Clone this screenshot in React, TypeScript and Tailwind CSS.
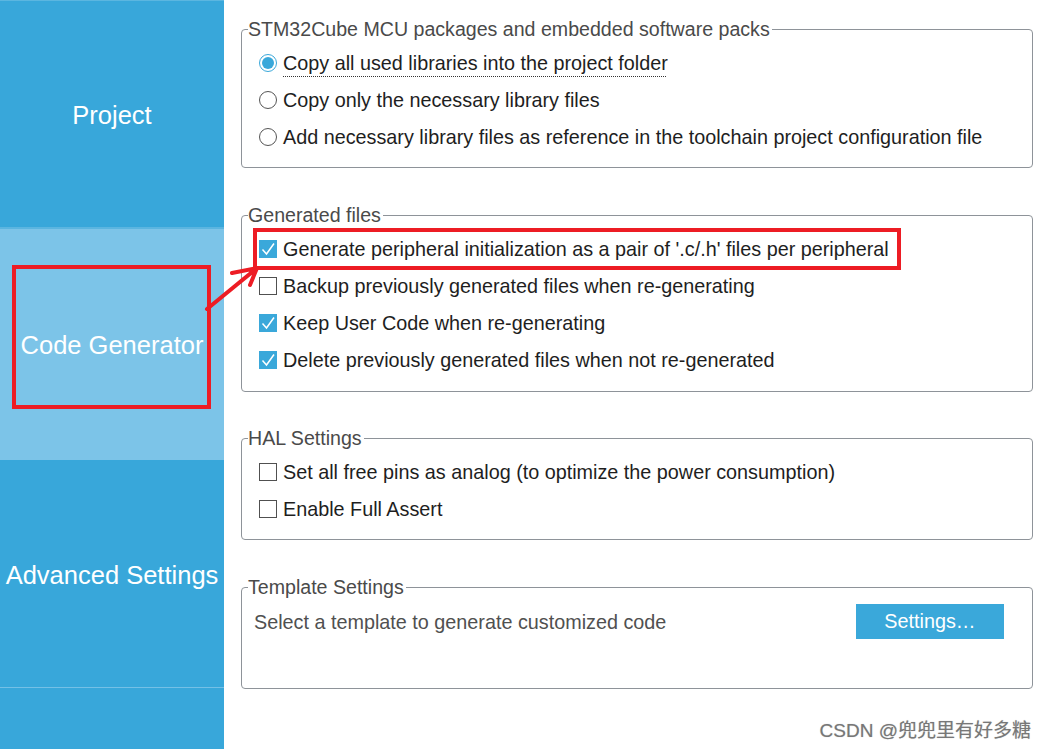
import React from "react";

const FONT = "font-['Liberation_Sans','Arimo',Arial,sans-serif]";

function Radio({ checked }: { checked?: boolean }) {
  return checked ? (
    <span className="flex h-[18px] w-[18px] shrink-0 items-center justify-center rounded-full border-[1.5px] border-[#3aa8da] bg-white">
      <span className="h-[12px] w-[12px] rounded-full bg-[#3aa8da]" />
    </span>
  ) : (
    <span className="h-[18px] w-[18px] shrink-0 rounded-full border border-[#555] bg-white" />
  );
}

function Check({ checked }: { checked?: boolean }) {
  return checked ? (
    <span className="flex h-[18px] w-[18px] shrink-0 items-center justify-center bg-[#3aa8da]">
      <svg width="18" height="18" viewBox="0 0 18 18">
        <path d="M3.5 9.5 L7.5 14 L15 3.5" fill="none" stroke="#fff" strokeWidth="1.5" />
      </svg>
    </span>
  ) : (
    <span className="h-[18px] w-[18px] shrink-0 border border-[#505050] bg-white" />
  );
}

function Row({ control, children }: { control: React.ReactNode; children: React.ReactNode }) {
  return (
    <div className="flex h-[37px] items-center gap-[6px] pl-[17px]">
      {control}
      <span className="text-[19.8px] leading-[24px] text-[#1e1e1e] whitespace-nowrap">{children}</span>
    </div>
  );
}

function Group({ title, children, className = "" }: { title: string; children: React.ReactNode; className?: string }) {
  return (
    <fieldset className={`m-0 w-[792px] rounded-[4px] border border-[#8e9399] p-0 ${className}`}>
      <legend className="ml-[6px] pr-[2px] text-[19.6px] leading-[24px] text-[#4a4a4a] whitespace-nowrap">{title}</legend>
      {children}
    </fieldset>
  );
}

export default function App() {
  return (
    <div className={`relative flex h-[749px] w-[1047px] overflow-hidden bg-white ${FONT}`}>
      <aside className="flex w-[224px] shrink-0 flex-col bg-[#38a7da] text-white">
        <div className="flex h-[227px] items-center justify-center border-t border-[#5bb6e0] pt-[2px] text-[25.5px]">Project</div>
        <div className="h-[2px] bg-[#5ab5e0]" />
        <div className="flex h-[231px] items-center justify-center bg-[#7cc4e8] pt-[2px] text-[25.5px] whitespace-nowrap">Code Generator</div>
        <div className="flex h-[227px] items-center justify-center pt-[3px] text-[25.5px] whitespace-nowrap">Advanced Settings</div>
        <div className="h-px bg-[#74c0e6]" />
        <div className="flex-1" />
      </aside>

      <main className="flex flex-col pl-[17px] pt-[17px]">
        <Group title="STM32Cube MCU packages and embedded software packs" className="pb-[12px]">
          <div className="pt-[3px]">
            <Row control={<Radio checked />}>
              <span className="underline decoration-dotted decoration-[#333] decoration-1 underline-offset-[6px]">
                Copy all used libraries into the project folder
              </span>
            </Row>
            <Row control={<Radio />}>Copy only the necessary library files</Row>
            <Row control={<Radio />}>Add necessary library files as reference in the toolchain project configuration file</Row>
          </div>
        </Group>

        <Group title="Generated files" className="mt-[35px] pb-[13px]">
          <div className="pt-[3px]">
            <Row control={<Check checked />}>Generate peripheral initialization as a pair of '.c/.h' files per peripheral</Row>
            <Row control={<Check />}>Backup previously generated files when re-generating</Row>
            <Row control={<Check checked />}>Keep User Code when re-generating</Row>
            <Row control={<Check checked />}>Delete previously generated files when not re-generated</Row>
          </div>
        </Group>

        <Group title="HAL Settings" className="mt-[34px] pb-[12px]">
          <div className="pt-[3px]">
            <Row control={<Check />}>Set all free pins as analog (to optimize the power consumption)</Row>
            <Row control={<Check />}>Enable Full Assert</Row>
          </div>
        </Group>

        <Group title="Template Settings" className="mt-[35px] pb-[49px]">
          <div className="mt-[5px] flex h-[35px] items-center justify-between pl-[12px] pr-[28px]">
            <span className="text-[19.8px] leading-[24px] text-[#505050]">Select a template to generate customized code</span>
            <button className="flex h-[35px] w-[148px] items-center justify-center bg-[#3aa8da] text-[19.8px] text-white">
              Settings…
            </button>
          </div>
        </Group>
      </main>

      <svg className="pointer-events-none absolute left-0 top-0" width="1047" height="749" viewBox="0 0 1047 749">
        <rect x="14" y="267" width="195" height="140" fill="none" stroke="#ed1c24" strokeWidth="4" />
        <rect x="255" y="230" width="644" height="38" fill="none" stroke="#ed1c24" strokeWidth="4" />
        <path d="M207 309 L257 268 M257 268 L232 273 M257 268 L250 285" fill="none" stroke="#ed1c24" strokeWidth="4" strokeLinecap="round" strokeLinejoin="round" />
      </svg>

      <div className="absolute right-[16px] top-[719px] text-[19px] leading-[24px] text-[#777] [text-shadow:0_0_1px_#bbb] font-['Liberation_Sans','Noto_Sans_CJK_SC',sans-serif] whitespace-nowrap">
        CSDN @兜兜里有好多糖
      </div>
    </div>
  );
}
